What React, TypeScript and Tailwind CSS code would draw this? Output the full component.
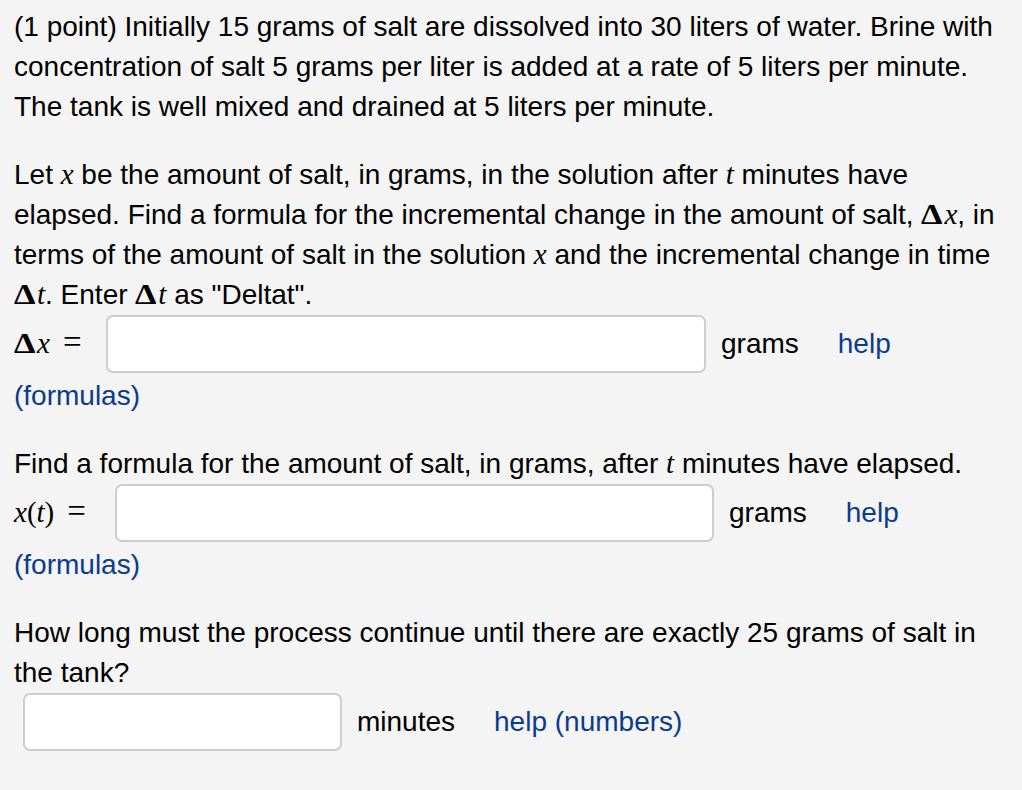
function MathX() {
  return <span className="italic">x</span>
}

function MathT() {
  return <span className="italic">t</span>
}

function Math({ children }: { children: React.ReactNode }) {
  return (
    <span className="font-['Liberation_Serif',serif] text-[29px] leading-none">{children}</span>
  )
}

function Delta() {
  return (
    <span className="mr-[1px] inline-block w-[22px] origin-left scale-x-[1.18] font-semibold">Δ</span>
  )
}

function Equals() {
  return <span className="ml-[13px] text-[33px]">=</span>
}

function AnswerInput({ width }: { width: string }) {
  return (
    <input
      type="text"
      className={`${width} h-[58px] rounded-[7px] border-2 border-[#cdcdcd] bg-white outline-none`}
    />
  )
}

function Formulas() {
  return <div className="mt-[3px] text-[#0b3b8c]">(formulas)</div>
}

function App() {
  return (
    <div className="min-h-[790px] bg-[#f4f4f4] px-[14px] pt-[7px] font-['Liberation_Sans',Arial,sans-serif] text-[28px] leading-[40px] text-black">
      <p className="whitespace-nowrap">
        (1 point) Initially 15 grams of salt are dissolved into 30 liters of water. Brine with
        <br />
        concentration of salt 5 grams per liter is added at a rate of 5 liters per minute.
        <br />
        The tank is well mixed and drained at 5 liters per minute.
      </p>

      <p className="mt-[28px] whitespace-nowrap">
        Let <Math><MathX /></Math> be the amount of salt, in grams, in the solution after <Math><MathT /></Math> minutes have
        <br />
        elapsed. Find a formula for the incremental change in the amount of salt, <Math><Delta /><MathX /></Math>, in
        <br />
        terms of the amount of salt in the solution <Math><MathX /></Math> and the incremental change in time
        <br />
        <Math><Delta /><MathT /></Math>. Enter <Math><Delta /><MathT /></Math> as "Deltat".
      </p>

      <div className="flex items-center">
        <span className="w-[92px] shrink-0">
          <Math><Delta /><MathX /><Equals /></Math>
        </span>
        <AnswerInput width="w-[600px]" />
        <span className="ml-[15px]">grams</span>
        <span className="ml-[39px] text-[#0b3b8c]">help</span>
      </div>
      <Formulas />

      <p className="mt-[28px] whitespace-nowrap">
        Find a formula for the amount of salt, in grams, after <Math><MathT /></Math> minutes have elapsed.
      </p>
      <div className="flex items-center">
        <span className="w-[101px] shrink-0">
          <Math><MathX />(<MathT />)<Equals /></Math>
        </span>
        <AnswerInput width="w-[599px]" />
        <span className="ml-[15px]">grams</span>
        <span className="ml-[39px] text-[#0b3b8c]">help</span>
      </div>
      <Formulas />

      <p className="mt-[28px] whitespace-nowrap">
        How long must the process continue until there are exactly 25 grams of salt in
        <br />
        the tank?
      </p>
      <div className="flex items-center pl-[9px]">
        <AnswerInput width="w-[319px]" />
        <span className="ml-[15px]">minutes</span>
        <span className="ml-[39px] text-[#0b3b8c]">help (numbers)</span>
      </div>
    </div>
  )
}

export default App
